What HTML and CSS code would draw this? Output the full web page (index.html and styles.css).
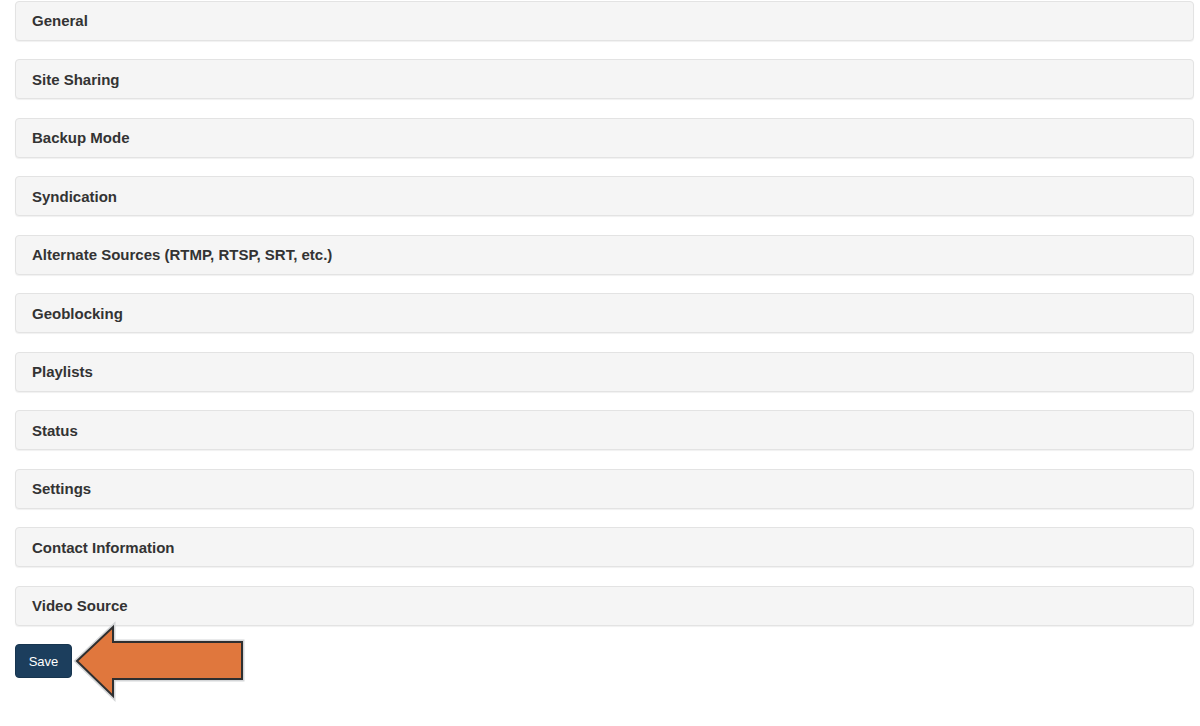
FILE: index.html
```html
<!DOCTYPE html>
<html lang="en">
<head>
<meta charset="utf-8">
<title>Settings</title>
<link rel="stylesheet" href="styles.css">
</head>
<body>
<div class="page">
  <div class="panel">General</div>
  <div class="panel">Site Sharing</div>
  <div class="panel">Backup Mode</div>
  <div class="panel">Syndication</div>
  <div class="panel">Alternate Sources (RTMP, RTSP, SRT, etc.)</div>
  <div class="panel">Geoblocking</div>
  <div class="panel">Playlists</div>
  <div class="panel">Status</div>
  <div class="panel">Settings</div>
  <div class="panel">Contact Information</div>
  <div class="panel">Video Source</div>
  <div class="actions">
    <button class="btn-save" type="button">Save</button>
    <svg class="arrow" width="180" height="82" viewBox="0 0 180 82" aria-hidden="true">
      <polygon points="7,40 43,6 43,21 172,21 172,58 43,58 43,75" fill="none" stroke="#d4d6d8" stroke-width="5" stroke-linejoin="miter"/>
      <polygon points="7,40 43,6 43,21 172,21 172,58 43,58 43,75" fill="#e0773d" stroke="#2e2f30" stroke-width="2" stroke-linejoin="miter"/>
    </svg>
  </div>
</div>
</body>
</html>
```

FILE: styles.css
```css
html, body {
  margin: 0;
  padding: 0;
  background: #ffffff;
}

body {
  font-family: "Liberation Sans", Arial, Helvetica, sans-serif;
  color: #333333;
  min-height: 726px;
}

.page {
  padding: 0.5px 6px 0 15px;
}

.panel {
  box-sizing: border-box;
  height: 40px;
  margin-bottom: 18.5px;
  padding: 0 16px;
  display: flex;
  align-items: center;
  background: #f5f5f5;
  border: 1px solid #e3e3e3;
  border-radius: 4px;
  box-shadow: 0 1px 1px rgba(0, 0, 0, 0.06);
  font-size: 15px;
  font-weight: bold;
  color: #333333;
}

.panel:last-of-type {
  margin-bottom: 17.5px;
}

.actions {
  position: relative;
  height: 80px;
}

.btn-save {
  display: block;
  box-sizing: border-box;
  width: 57px;
  height: 34px;
  padding: 0;
  border: 1px solid #17354f;
  border-radius: 4px;
  background: #1c3e5d;
  color: #ffffff;
  font-family: "Liberation Sans", Arial, Helvetica, sans-serif;
  font-size: 13px;
}

.arrow {
  position: absolute;
  left: 55px;
  top: -23px;
}
```
